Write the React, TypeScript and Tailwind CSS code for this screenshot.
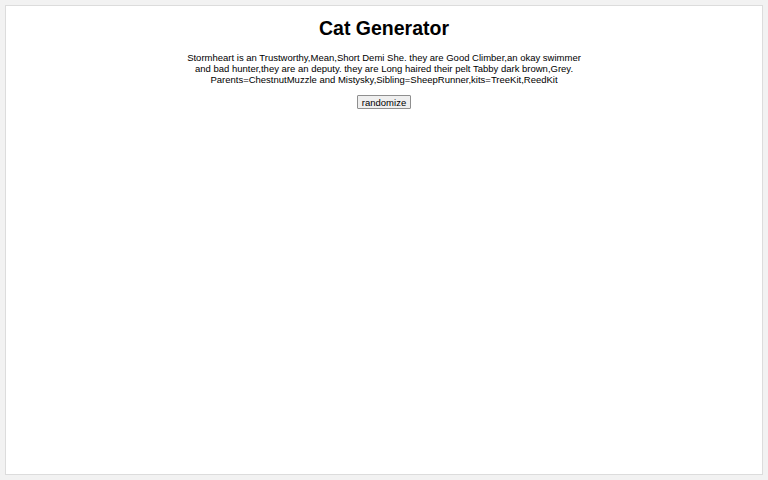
import React from "react";

const bio =
  "Stormheart is an Trustworthy,Mean,Short Demi She. they are Good Climber,an okay swimmer and bad hunter,they are an deputy. they are Long haired their pelt Tabby dark brown,Grey. Parents=ChestnutMuzzle and Mistysky,Sibling=SheepRunner,kits=TreeKit,ReedKit";

export default function App() {
  return (
    <div className="w-[768px] h-[480px] bg-[#f2f2f2] p-[5px] font-['Liberation_Sans',Arial,sans-serif] text-black">
      <div className="w-full h-full bg-white border border-[#dcdcdc] flex flex-col items-center">
        <h1 className="mt-[10px] text-[19.5px] leading-[24px] font-bold">Cat Generator</h1>
        <p className="mt-[12px] w-[400px] text-center text-[9.5px] leading-[11px]">{bio}</p>
        <button className="mt-[10px] px-[4px] h-[14px] text-[9.5px] leading-[11px] bg-[#efefef] border border-[#8f8f8f] rounded-[1px]">
          randomize
        </button>
      </div>
    </div>
  );
}
